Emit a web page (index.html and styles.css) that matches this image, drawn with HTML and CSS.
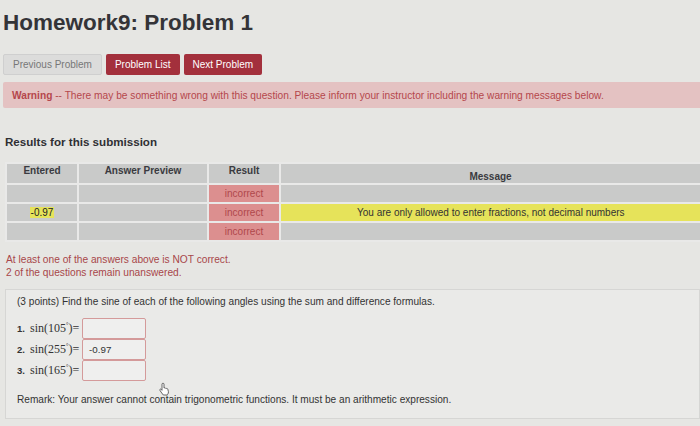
FILE: index.html
```html
<!DOCTYPE html>
<html>
<head>
<meta charset="utf-8">
<link rel="stylesheet" href="styles.css">
</head>
<body>
<div class="page">
  <h1 class="title">Homework9: Problem 1</h1>
  <div class="nav">
    <span class="btn btn-gray">Previous Problem</span>
    <span class="btn btn-red">Problem List</span>
    <span class="btn btn-red">Next Problem</span>
  </div>
  <div class="warning"><b>Warning</b>&nbsp;-- There may be something wrong with this question. Please inform your instructor including the warning messages below.</div>

  <h2 class="results-title">Results for this submission</h2>
  <table class="results">
    <tr class="head">
      <th class="c1">Entered</th>
      <th class="c2">Answer Preview</th>
      <th class="c3">Result</th>
      <th class="c4 msg-head">Message</th>
    </tr>
    <tr>
      <td></td><td></td><td class="bad">incorrect</td><td></td>
    </tr>
    <tr>
      <td class="entered"><span class="hl">-0.97</span></td><td></td><td class="bad">incorrect</td><td class="msg">You are only allowed to enter fractions, not decimal numbers</td>
    </tr>
    <tr>
      <td></td><td></td><td class="bad">incorrect</td><td></td>
    </tr>
  </table>

  <div class="summary">
    <div>At least one of the answers above is NOT correct.</div>
    <div>2 of the questions remain unanswered.</div>
  </div>

  <div class="problem">
    <div class="prompt">(3 points) Find the sine of each of the following angles using the sum and difference formulas.</div>
    <div class="items">
      <div class="item"><b class="num">1.</b><span class="math">sin(105<sup>&deg;</sup>)=</span><span class="answer"></span></div>
      <div class="item"><b class="num">2.</b><span class="math">sin(255<sup>&deg;</sup>)=</span><span class="answer">-0.97</span></div>
      <div class="item"><b class="num">3.</b><span class="math">sin(165<sup>&deg;</sup>)=</span><span class="answer"></span></div>
    </div>
    <div class="remark">Remark: Your answer cannot contain trigonometric functions. It must be an arithmetic expression.</div>
    <svg class="cursor" width="12" height="14" viewBox="0 0 12 14">
      <path d="M4 1.2c.6 0 1 .4 1 1V6l.3-.1c.5-.3 1.1 0 1.2.4.4-.3 1-.1 1.2.3.5-.2 1 .1 1.1.6l.6 2.4c.2 1-.1 2-.8 2.8L8 13H4.3L2 10 .9 8.2c-.3-.5 0-1 .5-1.1.4-.1.8.1 1 .4L3 8.3V2.2c0-.6.4-1 1-1z" fill="#fff" stroke="#444" stroke-width=".8"/>
    </svg>
  </div>
</div>
</body>
</html>
```

FILE: styles.css
```css
html, body {
  margin: 0;
  padding: 0;
}
body {
  background: #e6e6e3;
  font-family: "Liberation Sans", Arial, sans-serif;
  color: #333;
  width: 700px;
  height: 426px;
  overflow: hidden;
}
.page {
  padding-left: 3px;
}
.title {
  margin: 8px 0 0 0;
  font-size: 22.5px;
  line-height: 30px;
  font-weight: bold;
  color: #343438;
}
.nav {
  display: flex;
  gap: 4px;
  margin-top: 16px;
}
.btn {
  display: flex;
  align-items: center;
  height: 21px;
  padding: 0 9px;
  font-size: 10px;
  border-radius: 2px;
  box-sizing: border-box;
}
.btn-gray {
  background: #dcdcdb;
  color: #777;
  border: 1px solid #cfcfcf;
}
.btn-red {
  background: #a3303c;
  color: #fff;
}
.warning {
  margin-top: 7px;
  height: 26px;
  display: flex;
  align-items: center;
  padding-left: 9px;
  background: #e4c2c2;
  color: #b5474c;
  font-size: 10.2px;
  border-radius: 2px 0 0 2px;
}
.warning b {
  font-weight: bold;
}
.results-title {
  margin: 26px 0 0 2px;
  font-size: 11.6px;
  line-height: 16px;
  font-weight: bold;
  color: #2f2f33;
}
.results {
  margin: 12px 0 0 2px;
  width: 697px;
  border-collapse: separate;
  border-spacing: 2px;
  background: #e9e9e8;
  font-size: 10px;
  table-layout: fixed;
}
.results th, .results td {
  background: #c9cac9;
  padding: 0;
  text-align: center;
  height: 17px;
  line-height: 12px;
}
.results th {
  height: 18px;
  font-weight: bold;
  color: #3a3a40;
  vertical-align: top;
  padding-top: 1px;
}
.results th.msg-head {
  vertical-align: bottom;
  padding-top: 0;
}
.c1 { width: 70px; }
.c2 { width: 128px; }
.c3 { width: 70px; }
.results td.bad {
  background: #dc8f8f;
  color: #b0474b;
}
.results td.msg {
  background: #e6e35a;
  color: #333;
  text-align: left;
  padding-left: 76px;
}
.hl {
  background: #e6e35a;
  color: #222;
  padding: 0 1px;
}
.summary {
  margin: 11px 0 0 3px;
  font-size: 10.2px;
  line-height: 13px;
  color: #a8474a;
}
.problem {
  position: relative;
  margin: 10px 0 0 2px;
  height: 130px;
  box-sizing: border-box;
  border: 1px solid #d6d6d4;
  background: #eaeae8;
  padding: 6px 0 0 11px;
  font-size: 10.1px;
  color: #333;
}
.prompt {
  line-height: 12px;
}
.items {
  margin-top: 10px;
  display: flex;
  flex-direction: column;
}
.item {
  display: flex;
  align-items: center;
  height: 21px;
}
.num {
  width: 13px;
  font-size: 9.5px;
}
.math {
  font-family: "Liberation Serif", "Times New Roman", serif;
  font-size: 12px;
  width: 52px;
}
.math sup {
  font-size: 6px;
  vertical-align: 5px;
}
.answer {
  width: 64px;
  height: 21px;
  box-sizing: border-box;
  border: 1.5px solid #d49a9a;
  border-radius: 2px;
  background: #efefee;
  font-size: 9.8px;
  display: flex;
  align-items: center;
  padding-left: 6px;
}
.remark {
  margin-top: 13px;
  line-height: 12px;
}
.cursor {
  position: absolute;
  left: 153px;
  top: 92px;
}
```
